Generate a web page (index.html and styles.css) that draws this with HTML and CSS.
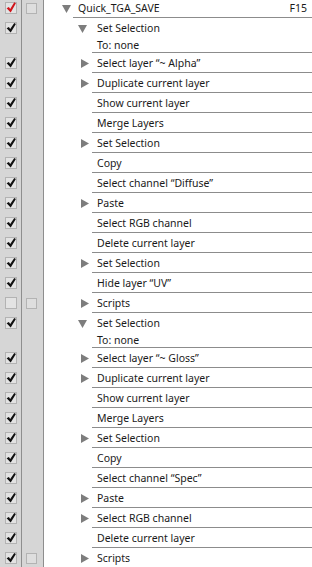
FILE: index.html
```html
<!DOCTYPE html>
<html>
<head>
<meta charset="utf-8">
<link rel="stylesheet" href="styles.css">
</head>
<body>
<div class="list">
  <div class="row">
    <div class="c-check"><span class="box"><svg class="ck red" viewBox="0 0 10 10"><path d="M0.6 5.2L2.9 3.9L4.2 6.1L8.3 -0.8L9.9 0.3L4.7 9.5Z"/></svg></span></div>
    <div class="c-dlg"><span class="dbox"></span></div>
    <div class="item l1"><span class="tw tw-d1"><svg class="tri" width="9" height="8" viewBox="0 0 9 8"><path d="M0 0H9L4.5 8Z"/></svg></span><div class="label"><span>Quick_TGA_SAVE</span><span class="key">F15</span></div></div>
  </div>
  <div class="row">
    <div class="c-check"><span class="box"><svg class="ck" viewBox="0 0 10 10"><path d="M0.6 5.2L2.9 3.9L4.2 6.1L8.3 0L9.9 1.1L4.7 9.5Z"/></svg></span></div>
    <div class="c-dlg"></div>
    <div class="item l2"><span class="tw tw-d"><svg class="tri" width="9" height="8" viewBox="0 0 9 8"><path d="M0 0H9L4.5 8Z"/></svg></span><div class="label open"><span>Set Selection</span></div></div>
  </div>
  <div class="row desc">
    <div class="c-check"></div>
    <div class="c-dlg"></div>
    <div class="item ld"><div class="label"><span>To: none</span></div></div>
  </div>
  <div class="row">
    <div class="c-check"><span class="box"><svg class="ck" viewBox="0 0 10 10"><path d="M0.6 5.2L2.9 3.9L4.2 6.1L8.3 0L9.9 1.1L4.7 9.5Z"/></svg></span></div>
    <div class="c-dlg"></div>
    <div class="item l2"><span class="tw tw-r"><svg class="tri" width="8" height="9" viewBox="0 0 8 9"><path d="M0 0L8 4.5L0 9Z"/></svg></span><div class="label"><span>Select layer “~ Alpha”</span></div></div>
  </div>
  <div class="row">
    <div class="c-check"><span class="box"><svg class="ck" viewBox="0 0 10 10"><path d="M0.6 5.2L2.9 3.9L4.2 6.1L8.3 0L9.9 1.1L4.7 9.5Z"/></svg></span></div>
    <div class="c-dlg"></div>
    <div class="item l2"><span class="tw tw-r"><svg class="tri" width="8" height="9" viewBox="0 0 8 9"><path d="M0 0L8 4.5L0 9Z"/></svg></span><div class="label"><span>Duplicate current layer</span></div></div>
  </div>
  <div class="row">
    <div class="c-check"><span class="box"><svg class="ck" viewBox="0 0 10 10"><path d="M0.6 5.2L2.9 3.9L4.2 6.1L8.3 0L9.9 1.1L4.7 9.5Z"/></svg></span></div>
    <div class="c-dlg"></div>
    <div class="item l2"><span class="tw"></span><div class="label"><span>Show current layer</span></div></div>
  </div>
  <div class="row">
    <div class="c-check"><span class="box"><svg class="ck" viewBox="0 0 10 10"><path d="M0.6 5.2L2.9 3.9L4.2 6.1L8.3 0L9.9 1.1L4.7 9.5Z"/></svg></span></div>
    <div class="c-dlg"></div>
    <div class="item l2"><span class="tw"></span><div class="label"><span>Merge Layers</span></div></div>
  </div>
  <div class="row">
    <div class="c-check"><span class="box"><svg class="ck" viewBox="0 0 10 10"><path d="M0.6 5.2L2.9 3.9L4.2 6.1L8.3 0L9.9 1.1L4.7 9.5Z"/></svg></span></div>
    <div class="c-dlg"></div>
    <div class="item l2"><span class="tw tw-r"><svg class="tri" width="8" height="9" viewBox="0 0 8 9"><path d="M0 0L8 4.5L0 9Z"/></svg></span><div class="label"><span>Set Selection</span></div></div>
  </div>
  <div class="row">
    <div class="c-check"><span class="box"><svg class="ck" viewBox="0 0 10 10"><path d="M0.6 5.2L2.9 3.9L4.2 6.1L8.3 0L9.9 1.1L4.7 9.5Z"/></svg></span></div>
    <div class="c-dlg"></div>
    <div class="item l2"><span class="tw"></span><div class="label"><span>Copy</span></div></div>
  </div>
  <div class="row">
    <div class="c-check"><span class="box"><svg class="ck" viewBox="0 0 10 10"><path d="M0.6 5.2L2.9 3.9L4.2 6.1L8.3 0L9.9 1.1L4.7 9.5Z"/></svg></span></div>
    <div class="c-dlg"></div>
    <div class="item l2"><span class="tw"></span><div class="label"><span>Select channel “Diffuse”</span></div></div>
  </div>
  <div class="row">
    <div class="c-check"><span class="box"><svg class="ck" viewBox="0 0 10 10"><path d="M0.6 5.2L2.9 3.9L4.2 6.1L8.3 0L9.9 1.1L4.7 9.5Z"/></svg></span></div>
    <div class="c-dlg"></div>
    <div class="item l2"><span class="tw tw-r"><svg class="tri" width="8" height="9" viewBox="0 0 8 9"><path d="M0 0L8 4.5L0 9Z"/></svg></span><div class="label"><span>Paste</span></div></div>
  </div>
  <div class="row">
    <div class="c-check"><span class="box"><svg class="ck" viewBox="0 0 10 10"><path d="M0.6 5.2L2.9 3.9L4.2 6.1L8.3 0L9.9 1.1L4.7 9.5Z"/></svg></span></div>
    <div class="c-dlg"></div>
    <div class="item l2"><span class="tw"></span><div class="label"><span>Select RGB channel</span></div></div>
  </div>
  <div class="row">
    <div class="c-check"><span class="box"><svg class="ck" viewBox="0 0 10 10"><path d="M0.6 5.2L2.9 3.9L4.2 6.1L8.3 0L9.9 1.1L4.7 9.5Z"/></svg></span></div>
    <div class="c-dlg"></div>
    <div class="item l2"><span class="tw"></span><div class="label"><span>Delete current layer</span></div></div>
  </div>
  <div class="row">
    <div class="c-check"><span class="box"><svg class="ck" viewBox="0 0 10 10"><path d="M0.6 5.2L2.9 3.9L4.2 6.1L8.3 0L9.9 1.1L4.7 9.5Z"/></svg></span></div>
    <div class="c-dlg"></div>
    <div class="item l2"><span class="tw tw-r"><svg class="tri" width="8" height="9" viewBox="0 0 8 9"><path d="M0 0L8 4.5L0 9Z"/></svg></span><div class="label"><span>Set Selection</span></div></div>
  </div>
  <div class="row">
    <div class="c-check"><span class="box"><svg class="ck" viewBox="0 0 10 10"><path d="M0.6 5.2L2.9 3.9L4.2 6.1L8.3 0L9.9 1.1L4.7 9.5Z"/></svg></span></div>
    <div class="c-dlg"></div>
    <div class="item l2"><span class="tw"></span><div class="label"><span>Hide layer “UV”</span></div></div>
  </div>
  <div class="row">
    <div class="c-check"><span class="box"></span></div>
    <div class="c-dlg"><span class="dbox"></span></div>
    <div class="item l2"><span class="tw tw-r"><svg class="tri" width="8" height="9" viewBox="0 0 8 9"><path d="M0 0L8 4.5L0 9Z"/></svg></span><div class="label"><span>Scripts</span></div></div>
  </div>
  <div class="row">
    <div class="c-check"><span class="box"><svg class="ck" viewBox="0 0 10 10"><path d="M0.6 5.2L2.9 3.9L4.2 6.1L8.3 0L9.9 1.1L4.7 9.5Z"/></svg></span></div>
    <div class="c-dlg"></div>
    <div class="item l2"><span class="tw tw-d"><svg class="tri" width="9" height="8" viewBox="0 0 9 8"><path d="M0 0H9L4.5 8Z"/></svg></span><div class="label open"><span>Set Selection</span></div></div>
  </div>
  <div class="row desc">
    <div class="c-check"></div>
    <div class="c-dlg"></div>
    <div class="item ld"><div class="label"><span>To: none</span></div></div>
  </div>
  <div class="row">
    <div class="c-check"><span class="box"><svg class="ck" viewBox="0 0 10 10"><path d="M0.6 5.2L2.9 3.9L4.2 6.1L8.3 0L9.9 1.1L4.7 9.5Z"/></svg></span></div>
    <div class="c-dlg"></div>
    <div class="item l2"><span class="tw tw-r"><svg class="tri" width="8" height="9" viewBox="0 0 8 9"><path d="M0 0L8 4.5L0 9Z"/></svg></span><div class="label"><span>Select layer “~ Gloss”</span></div></div>
  </div>
  <div class="row">
    <div class="c-check"><span class="box"><svg class="ck" viewBox="0 0 10 10"><path d="M0.6 5.2L2.9 3.9L4.2 6.1L8.3 0L9.9 1.1L4.7 9.5Z"/></svg></span></div>
    <div class="c-dlg"></div>
    <div class="item l2"><span class="tw tw-r"><svg class="tri" width="8" height="9" viewBox="0 0 8 9"><path d="M0 0L8 4.5L0 9Z"/></svg></span><div class="label"><span>Duplicate current layer</span></div></div>
  </div>
  <div class="row">
    <div class="c-check"><span class="box"><svg class="ck" viewBox="0 0 10 10"><path d="M0.6 5.2L2.9 3.9L4.2 6.1L8.3 0L9.9 1.1L4.7 9.5Z"/></svg></span></div>
    <div class="c-dlg"></div>
    <div class="item l2"><span class="tw"></span><div class="label"><span>Show current layer</span></div></div>
  </div>
  <div class="row">
    <div class="c-check"><span class="box"><svg class="ck" viewBox="0 0 10 10"><path d="M0.6 5.2L2.9 3.9L4.2 6.1L8.3 0L9.9 1.1L4.7 9.5Z"/></svg></span></div>
    <div class="c-dlg"></div>
    <div class="item l2"><span class="tw"></span><div class="label"><span>Merge Layers</span></div></div>
  </div>
  <div class="row">
    <div class="c-check"><span class="box"><svg class="ck" viewBox="0 0 10 10"><path d="M0.6 5.2L2.9 3.9L4.2 6.1L8.3 0L9.9 1.1L4.7 9.5Z"/></svg></span></div>
    <div class="c-dlg"></div>
    <div class="item l2"><span class="tw tw-r"><svg class="tri" width="8" height="9" viewBox="0 0 8 9"><path d="M0 0L8 4.5L0 9Z"/></svg></span><div class="label"><span>Set Selection</span></div></div>
  </div>
  <div class="row">
    <div class="c-check"><span class="box"><svg class="ck" viewBox="0 0 10 10"><path d="M0.6 5.2L2.9 3.9L4.2 6.1L8.3 0L9.9 1.1L4.7 9.5Z"/></svg></span></div>
    <div class="c-dlg"></div>
    <div class="item l2"><span class="tw"></span><div class="label"><span>Copy</span></div></div>
  </div>
  <div class="row">
    <div class="c-check"><span class="box"><svg class="ck" viewBox="0 0 10 10"><path d="M0.6 5.2L2.9 3.9L4.2 6.1L8.3 0L9.9 1.1L4.7 9.5Z"/></svg></span></div>
    <div class="c-dlg"></div>
    <div class="item l2"><span class="tw"></span><div class="label"><span>Select channel “Spec”</span></div></div>
  </div>
  <div class="row">
    <div class="c-check"><span class="box"><svg class="ck" viewBox="0 0 10 10"><path d="M0.6 5.2L2.9 3.9L4.2 6.1L8.3 0L9.9 1.1L4.7 9.5Z"/></svg></span></div>
    <div class="c-dlg"></div>
    <div class="item l2"><span class="tw tw-r"><svg class="tri" width="8" height="9" viewBox="0 0 8 9"><path d="M0 0L8 4.5L0 9Z"/></svg></span><div class="label"><span>Paste</span></div></div>
  </div>
  <div class="row">
    <div class="c-check"><span class="box"><svg class="ck" viewBox="0 0 10 10"><path d="M0.6 5.2L2.9 3.9L4.2 6.1L8.3 0L9.9 1.1L4.7 9.5Z"/></svg></span></div>
    <div class="c-dlg"></div>
    <div class="item l2"><span class="tw tw-r"><svg class="tri" width="8" height="9" viewBox="0 0 8 9"><path d="M0 0L8 4.5L0 9Z"/></svg></span><div class="label"><span>Select RGB channel</span></div></div>
  </div>
  <div class="row">
    <div class="c-check"><span class="box"><svg class="ck" viewBox="0 0 10 10"><path d="M0.6 5.2L2.9 3.9L4.2 6.1L8.3 0L9.9 1.1L4.7 9.5Z"/></svg></span></div>
    <div class="c-dlg"></div>
    <div class="item l2"><span class="tw"></span><div class="label"><span>Delete current layer</span></div></div>
  </div>
  <div class="row">
    <div class="c-check"><span class="box"><svg class="ck" viewBox="0 0 10 10"><path d="M0.6 5.2L2.9 3.9L4.2 6.1L8.3 0L9.9 1.1L4.7 9.5Z"/></svg></span></div>
    <div class="c-dlg"><span class="dbox"></span></div>
    <div class="item l2"><span class="tw tw-r"><svg class="tri" width="8" height="9" viewBox="0 0 8 9"><path d="M0 0L8 4.5L0 9Z"/></svg></span><div class="label"><span>Scripts</span></div></div>
  </div>
</div>
</body>
</html>
```

FILE: styles.css
```css
html, body {
  margin: 0;
  padding: 0;
  background: #ffffff;
  overflow: hidden;
}

body {
  font-family: "Noto Sans", "Open Sans", sans-serif;
  font-size: 10.5px;
  color: #1a1a1a;
}

.list {
  margin-top: -2px;
  display: flex;
  flex-direction: column;
}

.row {
  display: flex;
  height: 20px;
}

.row.desc {
  height: 15px;
}

.c-check,
.c-dlg {
  width: 22px;
  box-sizing: border-box;
  border-right: 1px solid #8e8e8e;
  background: #d6d6d6;
  display: flex;
  align-items: center;
  flex: none;
}

.c-check {
  padding-left: 5px;
}

.c-dlg {
  padding-left: 4px;
}

.box {
  width: 12px;
  height: 12px;
  box-sizing: border-box;
  border: 1px solid #b3b3b3;
  background: #e3e3e3;
  display: flex;
  align-items: center;
  justify-content: center;
}

.dbox {
  width: 11px;
  height: 11px;
  box-sizing: border-box;
  border: 1px solid #b3b3b3;
  background: #dedede;
}

.ck {
  width: 10px;
  height: 10px;
  overflow: visible;
  fill: #111111;
}

.ck.red {
  fill: #d0141b;
}

.item {
  flex: 1;
  display: flex;
  background: #ffffff;
  min-width: 0;
}

.item.l1 {
  padding-left: 14px;
}

.item.l2 {
  padding-left: 33px;
}

.item.ld {
  padding-left: 48px;
}

.tw {
  width: 15px;
  flex: none;
  display: flex;
  align-items: center;
  box-sizing: border-box;
  padding-top: 1px;
}

.tw-d1 {
  padding-left: 4px;
}

.tw-d {
  padding-left: 1px;
}

.tw-r {
  padding-left: 4px;
}

.tri {
  fill: #7d7d7d;
}

.label {
  flex: 1;
  display: flex;
  align-items: center;
  justify-content: space-between;
  padding: 0 5px;
  border-bottom: 1px solid #8c8c8c;
  white-space: nowrap;
}

.label.open {
  border-bottom: none;
}

.key {
  color: #1a1a1a;
}
```
